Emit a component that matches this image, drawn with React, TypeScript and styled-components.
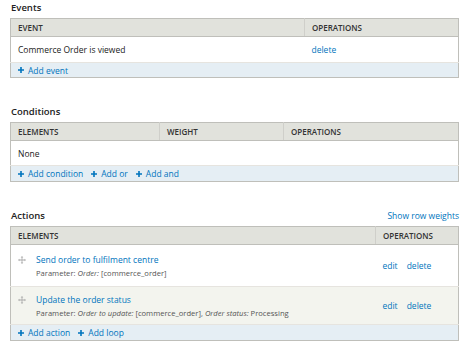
import styled, { createGlobalStyle } from 'styled-components'

const GlobalStyle = createGlobalStyle`
  body {
    margin: 0;
    background: #fff;
    font-family: "Open Sans", "DejaVu Sans", sans-serif;
    color: #222;
  }
`

const Page = styled.div`
  display: flex;
  flex-direction: column;
  gap: 26px;
  padding: 0 15px 0 10px;
`

const Section = styled.section``

const SectionHead = styled.div`
  display: flex;
  justify-content: space-between;
  align-items: center;
  height: 14px;
  margin-bottom: 4px;
`

const Title = styled.h2`
  margin: 0 0 0 1px;
  font-size: 9.5px;
  font-weight: 600;
  color: #222;
`

const Link = styled.a`
  color: #0074bd;
  text-decoration: none;
  font-size: 8.5px;
  cursor: pointer;
`

const Table = styled.table`
  width: 100%;
  border-collapse: collapse;
  table-layout: fixed;
  border: 1px solid #bfbfba;
  font-size: 8.5px;
`

const Th = styled.th<{ $w?: number }>`
  width: ${(p) => (p.$w ? `${p.$w - 14}px` : 'auto')};
  height: 17px;
  padding: 0 7px;
  text-align: left;
  font-size: 8px;
  font-weight: 600;
  color: #333;
  background: #e1e2dc;
  border-bottom: 1px solid #bfbfba;
  border-left: 1px solid #cfcfca;
  &:first-child {
    border-left: none;
  }
`

const Row = styled.tr<{ $h: number; $alt?: boolean }>`
  height: ${(p) => p.$h}px;
  background: ${(p) => (p.$alt ? '#f3f4ee' : '#fff')};
  border-bottom: 1px solid #e6e4df;
`

const Td = styled.td`
  padding: 0 7px;
  vertical-align: middle;
`

const AddRow = styled.tr<{ $h: number }>`
  height: ${(p) => p.$h}px;
  background: #e5eef4;
`

const AddLinks = styled.div`
  display: flex;
  gap: 8px;
`

const AddLink = styled(Link)`
  display: inline-flex;
  align-items: center;
  gap: 4px;
`

const Ops = styled.div`
  display: flex;
  gap: 9px;
`

const Element = styled.div`
  display: flex;
  align-items: flex-start;
  gap: 10px;
`

const Handle = styled.span`
  width: 8px;
  padding-top: 2px;
  display: flex;
`

const ElementBody = styled.div`
  display: flex;
  flex-direction: column;
  gap: 3px;
`

const Param = styled.div`
  font-size: 7.6px;
  color: #555;
  em {
    font-style: italic;
  }
`

function Plus() {
  return (
    <svg width="6" height="6" viewBox="0 0 6 6">
      <path d="M2.2 0h1.6v2.2H6v1.6H3.8V6H2.2V3.8H0V2.2h2.2z" fill="#0074bd" />
    </svg>
  )
}

function DragHandle() {
  return (
    <svg width="8" height="8" viewBox="0 0 8 8" fill="#aaa">
      <path d="M4 0L5.3 1.4H4.4V3.6H6.6V2.7L8 4 6.6 5.3V4.4H4.4V6.6H5.3L4 8 2.7 6.6H3.6V4.4H1.4V5.3L0 4 1.4 2.7V3.6H3.6V1.4H2.7Z" />
    </svg>
  )
}

function AddBar({ items }: { items: string[] }) {
  return (
    <AddLinks>
      {items.map((it) => (
        <AddLink key={it}>
          <Plus />
          {it}
        </AddLink>
      ))}
    </AddLinks>
  )
}

export default function App() {
  return (
    <Page>
      <GlobalStyle />
      <Section>
        <SectionHead>
          <Title>Events</Title>
        </SectionHead>
        <Table>
          <thead>
            <tr>
              <Th $w={293}>EVENT</Th>
              <Th>OPERATIONS</Th>
            </tr>
          </thead>
          <tbody>
            <Row $h={26}>
              <Td>Commerce Order is viewed</Td>
              <Td>
                <Link>delete</Link>
              </Td>
            </Row>
            <AddRow $h={15}>
              <Td colSpan={2}>
                <AddBar items={['Add event']} />
              </Td>
            </AddRow>
          </tbody>
        </Table>
      </Section>

      <Section>
        <SectionHead>
          <Title>Conditions</Title>
        </SectionHead>
        <Table>
          <thead>
            <tr>
              <Th $w={148}>ELEMENTS</Th>
              <Th $w={123}>WEIGHT</Th>
              <Th>OPERATIONS</Th>
            </tr>
          </thead>
          <tbody>
            <Row $h={25}>
              <Td colSpan={3}>None</Td>
            </Row>
            <AddRow $h={16}>
              <Td colSpan={3}>
                <AddBar items={['Add condition', 'Add or', 'Add and']} />
              </Td>
            </AddRow>
          </tbody>
        </Table>
      </Section>

      <Section>
        <SectionHead>
          <Title>Actions</Title>
          <Link>Show row weights</Link>
        </SectionHead>
        <Table>
          <thead>
            <tr>
              <Th $w={364}>ELEMENTS</Th>
              <Th>OPERATIONS</Th>
            </tr>
          </thead>
          <tbody>
            <Row $h={42}>
              <Td>
                <Element>
                  <Handle>
                    <DragHandle />
                  </Handle>
                  <ElementBody>
                    <Link>Send order to fulfilment centre</Link>
                    <Param>
                      Parameter: <em>Order:</em> [commerce_order]
                    </Param>
                  </ElementBody>
                </Element>
              </Td>
              <Td>
                <Ops>
                  <Link>edit</Link>
                  <Link>delete</Link>
                </Ops>
              </Td>
            </Row>
            <Row $h={38} $alt>
              <Td>
                <Element>
                  <Handle>
                    <DragHandle />
                  </Handle>
                  <ElementBody>
                    <Link>Update the order status</Link>
                    <Param>
                      Parameter: <em>Order to update:</em> [commerce_order], <em>Order status:</em> Processing
                    </Param>
                  </ElementBody>
                </Element>
              </Td>
              <Td>
                <Ops>
                  <Link>edit</Link>
                  <Link>delete</Link>
                </Ops>
              </Td>
            </Row>
            <AddRow $h={16}>
              <Td colSpan={2}>
                <AddBar items={['Add action', 'Add loop']} />
              </Td>
            </AddRow>
          </tbody>
        </Table>
      </Section>
    </Page>
  )
}
